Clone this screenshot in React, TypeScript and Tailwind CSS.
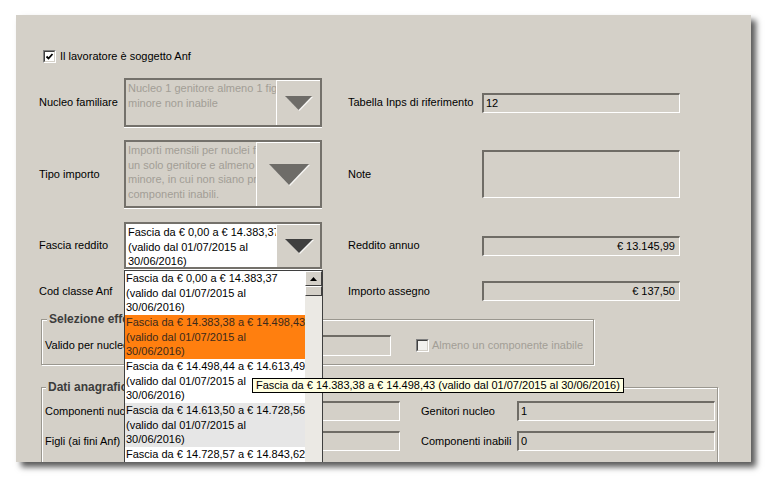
import React from "react";

const FONT = { fontFamily: '"Liberation Sans", Arial, sans-serif' };

function Sunken({ className = "", children }: { className?: string; children?: React.ReactNode }) {
  return (
    <div
      className={
        "box-border bg-[#d4d0c8] border-t-2 border-l-2 border-b border-r border-t-[#6f6c66] border-l-[#6f6c66] border-b-white border-r-white text-[11px] text-black leading-[16px] " +
        className
      }
    >
      {children}
    </div>
  );
}

function Tri({ w, h, color }: { w: number; h: number; color: string }) {
  return (
    <svg width={w + 2} height={h + 2} viewBox={`0 0 ${w + 2} ${h + 2}`}>
      <polygon points={`1,1 ${w + 1},1 ${w / 2 + 1},${h + 1}`} fill="#ffffff" transform="translate(1,1)" opacity="0.8" />
      <polygon points={`1,1 ${w + 1},1 ${w / 2 + 1},${h + 1}`} fill={color} />
    </svg>
  );
}

function Combo({
  lines,
  height,
  btnW,
  triW,
  triH,
  enabled,
}: {
  lines: string[];
  height: string;
  btnW: string;
  triW: number;
  triH: number;
  enabled?: boolean;
}) {
  return (
    <div
      className={
        "flex box-border w-[198px] border-2 border-[#74716b] shadow-[0_1px_0_#ffffff] " + height
      }
    >
      <div
        className={
          "flex-1 min-w-0 overflow-hidden pl-[2px] pt-[1px] text-[11px] leading-[14.7px] " +
          (enabled ? "bg-white text-black" : "bg-[#d4d0c8] text-[#a29e96]")
        }
      >
        {lines.map((l, i) => (
          <div key={i} className="whitespace-nowrap">
            {l}
          </div>
        ))}
      </div>
      <div
        className={
          "flex items-center justify-center bg-[#d4d0c8] border-t border-l border-white " + btnW
        }
      >
        <Tri w={triW} h={triH} color={enabled ? "#3f3f3f" : "#6e6c68"} />
      </div>
    </div>
  );
}

function CheckBox({ checked, disabled }: { checked?: boolean; disabled?: boolean }) {
  return (
    <div
      className={
        "box-border w-[13px] h-[13px] border-t border-l border-t-[#808080] border-l-[#808080] border-b border-r border-b-white border-r-white " +
        (disabled ? "bg-[#f2f1ee]" : "bg-white")
      }
    >
      <div className="w-full h-full border-t border-l border-t-[#404040] border-l-[#404040] border-b border-r border-b-[#d4d0c8] border-r-[#d4d0c8] flex items-center justify-center">
        {checked && (
          <svg width="9" height="9" viewBox="0 0 9 9">
            <path d="M1.5 4.5 L3.5 6.5 L7.5 2" stroke="#000" strokeWidth="1.8" fill="none" />
          </svg>
        )}
      </div>
    </div>
  );
}

function Label({ children, className = "" }: { children: React.ReactNode; className?: string }) {
  return <div className={"text-[11px] text-black whitespace-nowrap " + className}>{children}</div>;
}

const items = [
  { a: "Fascia da € 0,00 a € 14.383,37", bg: "bg-white", tc: "text-black" },
  { a: "Fascia da € 14.383,38 a € 14.498,43", bg: "bg-[#ff7f0f]", tc: "text-[#3b2a1c]" },
  { a: "Fascia da € 14.498,44 a € 14.613,49", bg: "bg-white", tc: "text-black" },
  { a: "Fascia da € 14.613,50 a € 14.728,56", bg: "bg-[#e6e6e6]", tc: "text-black" },
  { a: "Fascia da € 14.728,57 a € 14.843,62", bg: "bg-white", tc: "text-black" },
];

export default function App() {
  return (
    <div className="w-[768px] h-[479px] bg-white pt-[15px] pl-[16px] overflow-hidden" style={FONT}>
      <div className="relative w-[735px] h-[447px] bg-[#d4d0c8] overflow-hidden shadow-[5px_5px_6px_rgba(0,0,0,0.65)]">
        <div className="pl-[23px] pt-[35px]">
          {/* checkbox row */}
          <div className="flex items-center gap-[4px] ml-[4px] h-[13px]">
            <CheckBox checked />
            <Label>Il lavoratore è soggetto Anf</Label>
          </div>

          {/* main grid */}
          <div className="grid grid-cols-[85px_198px_26px_134px_198px] mt-[15px]">
            {/* row 1 */}
            <div className="h-[49px] flex items-center">
              <Label>Nucleo familiare</Label>
            </div>
            <Combo
              lines={["Nucleo 1 genitore almeno 1 figlio", "minore non inabile"]}
              height="h-[49px]"
              btnW="w-[44px]"
              triW={27}
              triH={14}
            />
            <div />
            <div className="flex items-center">
              <Label>Tabella Inps di riferimento</Label>
            </div>
            <div className="flex items-center">
              <Sunken className="w-[198px] h-[20px] pl-[2px]">12</Sunken>
            </div>

            {/* row 2 */}
            <div className="h-[68px] mt-[13px] flex items-center">
              <Label>Tipo importo</Label>
            </div>
            <div className="mt-[13px]">
              <Combo
                lines={[
                  "Importi mensili per nuclei familiari con",
                  "un solo genitore e almeno un figlio",
                  "minore, in cui non siano presenti",
                  "componenti inabili.",
                ]}
                height="h-[68px]"
                btnW="w-[64px]"
                triW={40}
                triH={21}
              />
            </div>
            <div />
            <div className="mt-[13px] flex items-center">
              <Label>Note</Label>
            </div>
            <div className="mt-[13px] flex items-center">
              <Sunken className="w-[198px] h-[48px]" />
            </div>

            {/* row 3 */}
            <div className="h-[47px] mt-[14px] flex items-center">
              <Label>Fascia reddito</Label>
            </div>
            <div className="mt-[14px]">
              <Combo
                lines={["Fascia da € 0,00 a € 14.383,37", "(valido dal 01/07/2015 al", "30/06/2016)"]}
                height="h-[47px]"
                btnW="w-[44px]"
                triW={28}
                triH={14}
                enabled
              />
            </div>
            <div />
            <div className="mt-[14px] flex items-center">
              <Label>Reddito annuo</Label>
            </div>
            <div className="mt-[14px] flex items-center">
              <Sunken className="w-[198px] h-[20px] pr-[4px] text-right">€ 13.145,99</Sunken>
            </div>

            {/* row 4 */}
            <div className="h-[20px] mt-[12px] flex items-center">
              <Label>Cod classe Anf</Label>
            </div>
            <div className="mt-[12px]" />
            <div />
            <div className="mt-[12px] flex items-center">
              <Label>Importo assegno</Label>
            </div>
            <div className="mt-[12px]">
              <Sunken className="w-[198px] h-[20px] pr-[4px] text-right">€ 137,50</Sunken>
            </div>
          </div>

          {/* group 1 */}
          <div className="relative ml-[2px] mt-[18px] w-[553px] h-[46px] border border-[#9a978f] shadow-[inset_1px_1px_0_#ffffff,1px_1px_0_#ffffff]">
            <div className="absolute -top-[9px] left-[5px] px-[2px] bg-[#d4d0c8] text-[12px] font-bold text-[#3c3c3c] leading-[16px]">
              Selezione effettuata
            </div>
            <div className="flex items-center mt-[15px] ml-[3px]">
              <Label className="w-[79px]">Valido per nucleo</Label>
              <Sunken className="w-[267px] h-[21px]" />
              <div className="ml-[25px] flex items-center gap-[3px]">
                <CheckBox disabled />
                <div className="text-[11px] text-[#a29e96] whitespace-nowrap">Almeno un componente inabile</div>
              </div>
            </div>
          </div>

          {/* group 2 */}
          <div className="relative ml-[2px] mt-[22px] w-[677px] h-[90px] border border-[#9a978f] shadow-[inset_1px_1px_0_#ffffff,1px_1px_0_#ffffff]">
            <div className="absolute -top-[9px] left-[4px] px-[2px] bg-[#d4d0c8] text-[12px] font-bold text-[#3c3c3c] leading-[16px]">
              Dati anagrafici
            </div>
            <div className="flex items-center mt-[13px] ml-[3px]">
              <Label className="w-[79px]">Componenti nucleo</Label>
              <Sunken className="w-[276px] h-[20px]" />
              <Label className="ml-[21px] w-[96px]">Genitori nucleo</Label>
              <Sunken className="w-[198px] h-[20px] pl-[2px]">1</Sunken>
            </div>
            <div className="flex items-center mt-[10px] ml-[3px]">
              <Label className="w-[79px]">Figli (ai fini Anf)</Label>
              <Sunken className="w-[276px] h-[20px]" />
              <Label className="ml-[21px] w-[96px]">Componenti inabili</Label>
              <Sunken className="w-[198px] h-[20px] pl-[2px]">0</Sunken>
            </div>
          </div>
        </div>

        {/* dropdown list overlay */}
        <div className="absolute left-[108px] top-[255px] w-[199px] h-[230px] bg-white border border-[#3f3f3f] flex">
          <div className="w-[180px] overflow-hidden">
            {items.map((it, i) => (
              <div
                key={i}
                className={"h-[44px] pl-[1px] text-[11px] leading-[14.7px] whitespace-nowrap overflow-hidden " + it.bg + " " + it.tc}
              >
                <div>{it.a}</div>
                <div>(valido dal 01/07/2015 al</div>
                <div>30/06/2016)</div>
              </div>
            ))}
          </div>
          <div className="w-[17px] bg-[#ebe9e4] flex flex-col">
            <div className="h-[15px] box-border bg-[#d4d0c8] border-t border-l border-white border-b border-r border-b-[#404040] border-r-[#404040] flex items-center justify-center">
              <svg width="7" height="4" viewBox="0 0 7 4">
                <polygon points="0,4 7,4 3.5,0" fill="#000" />
              </svg>
            </div>
            <div className="h-[10px] box-border bg-[#d4d0c8] border-t border-l border-white border-b border-r border-b-[#404040] border-r-[#404040]" />
          </div>
        </div>

        {/* tooltip */}
        <div className="absolute left-[236px] top-[363px] h-[15px] px-[3px] bg-[#ffffe1] border border-black text-[11px] leading-[13px] text-black whitespace-nowrap">
          Fascia da € 14.383,38 a € 14.498,43 (valido dal 01/07/2015 al 30/06/2016)
        </div>
      </div>
    </div>
  );
}
